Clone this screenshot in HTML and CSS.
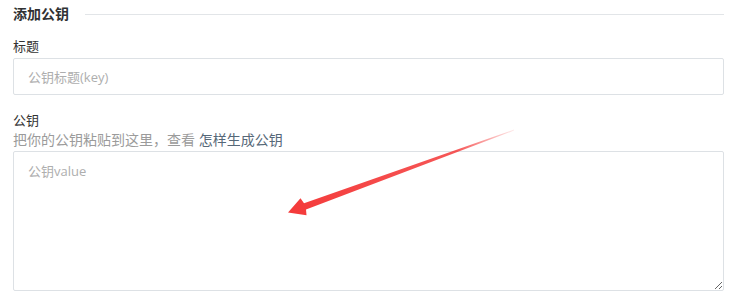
FILE: index.html
```html
<!DOCTYPE html>
<html lang="zh-CN">
<head>
<meta charset="utf-8">
<title>添加公钥</title>
<link rel="stylesheet" href="styles.css">
</head>
<body>
<div class="page">
  <div class="section-head">
    <span class="section-title">添加公钥</span>
    <span class="section-line"></span>
  </div>
  <div class="field">
    <label class="label" for="key-title">标题</label>
    <input id="key-title" class="input" type="text" placeholder="公钥标题(key)">
  </div>
  <div class="field field-value">
    <label class="label" for="key-value">公钥</label>
    <div class="hint">把你的公钥粘贴到这里，查看 <a class="hint-link" href="#">怎样生成公钥</a></div>
    <textarea id="key-value" class="textarea" placeholder="公钥value"></textarea>
  </div>
  <svg class="arrow" width="739" height="300" viewBox="0 0 739 300" aria-hidden="true">
    <defs>
      <linearGradient id="fade" x1="514" y1="130" x2="288" y2="212" gradientUnits="userSpaceOnUse">
        <stop offset="0" stop-color="#f43a3a" stop-opacity="0.1"/>
        <stop offset="0.25" stop-color="#f43a3a" stop-opacity="0.85"/>
        <stop offset="1" stop-color="#f43a3a" stop-opacity="1"/>
      </linearGradient>
    </defs>
    <polygon fill="url(#fade)" points="514,129.6 304,203.2 300.5,198.3 288,212.6 306.5,215.3 306,209.6 514,130.6"/>
  </svg>
</div>
</body>
</html>
```

FILE: styles.css
```css
html, body {
  margin: 0;
  padding: 0;
  background: #ffffff;
}

body {
  font-family: "Open Sans", "Noto Sans CJK SC", sans-serif;
  color: #333333;
}

.page {
  position: relative;
  width: 739px;
  height: 300px;
  box-sizing: border-box;
  padding: 4px 15px 0 13px;
  overflow: hidden;
}

.section-head {
  display: flex;
  align-items: center;
  height: 20px;
}

.section-title {
  font-size: 14px;
  font-weight: 700;
  line-height: 20px;
  color: #303133;
}

.section-line {
  flex: 1;
  margin-left: 16px;
  border-top: 1px solid #e2e5e8;
}

.field {
  display: flex;
  flex-direction: column;
  margin-top: 12px;
}

.field-value {
  margin-top: 15px;
}

.label {
  font-size: 13px;
  line-height: 20px;
  color: #333333;
}

.field .label + .input {
  margin-top: 2px;
}

.input {
  box-sizing: border-box;
  height: 37px;
  width: 100%;
  margin: 0;
  padding: 0 14px;
  border: 1px solid #dde1e5;
  border-radius: 2px;
  font-family: inherit;
  font-size: 13px;
  color: #333;
  outline: none;
}

.input::placeholder,
.textarea::placeholder {
  color: #aeaeae;
}

.hint {
  font-size: 14px;
  line-height: 19px;
  color: #9b9b9b;
}

.hint-link {
  color: #566878;
  text-decoration: none;
}

.textarea {
  box-sizing: border-box;
  display: block;
  width: 100%;
  height: 140px;
  margin: 2px 0 0;
  padding: 9px 14px;
  border: 1px solid #dde1e5;
  border-radius: 2px;
  font-family: inherit;
  font-size: 13px;
  line-height: 20px;
  color: #333;
  resize: vertical;
  outline: none;
}

.arrow {
  position: absolute;
  left: 0;
  top: 0;
  pointer-events: none;
}
```
